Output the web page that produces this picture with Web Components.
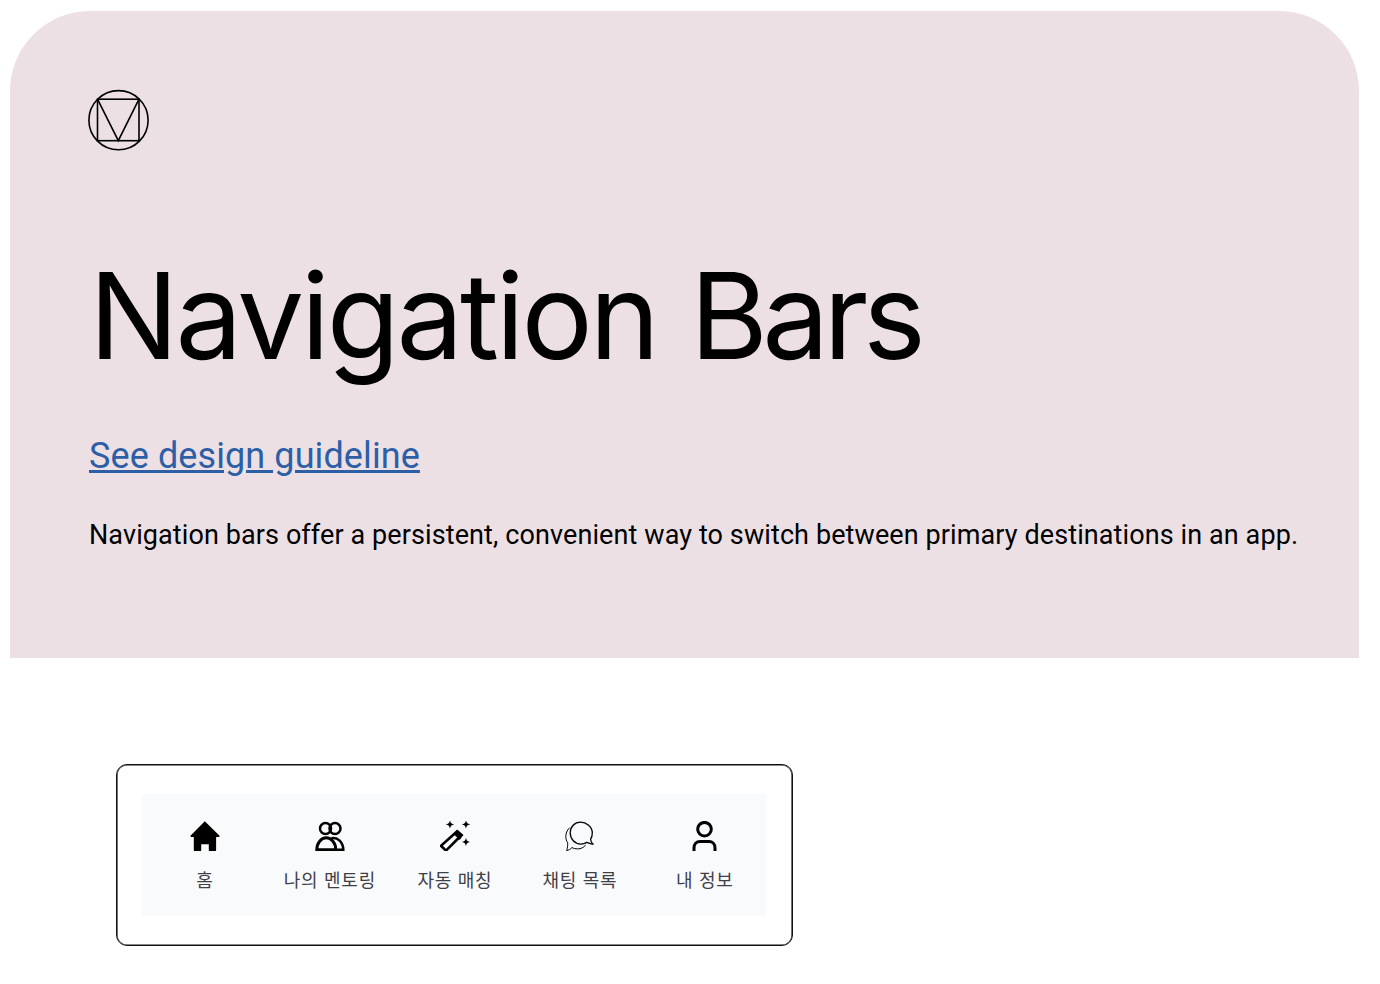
<!DOCTYPE html>
<html lang="ko">
<head>
<meta charset="utf-8">
<title>Navigation Bars</title>
<style>
  html, body { margin: 0; padding: 0; background: #fff; }
</style>
</head>
<body>
<docs-page>
  <docs-hero heading="Navigation" tail="Bars" link="See design guideline">
    Navigation bars offer a persistent, convenient way to switch between primary destinations in an app.
  </docs-hero>
  <story-frame>
    <nav-bar>
      <nav-item label="홈" icon="home"></nav-item>
      <nav-item label="나의 멘토링" icon="people"></nav-item>
      <nav-item label="자동 매칭" icon="wand"></nav-item>
      <nav-item label="채팅 목록" icon="chat"></nav-item>
      <nav-item label="내 정보" icon="person"></nav-item>
    </nav-bar>
  </story-frame>
</docs-page>

<script>
// Página contenedora
class DocsPage extends HTMLElement {
  constructor() {
    super();
    this.attachShadow({ mode: 'open' });
    this.shadowRoot.innerHTML = `
      <style>
        :host { display: block; padding: 11px 21px 0 10px; }
      </style>
      <slot></slot>
    `;
  }
}

class DocsHero extends HTMLElement {
  constructor() {
    super();
    this.attachShadow({ mode: 'open' });
  }

  connectedCallback() {
    this.shadowRoot.innerHTML = `
      <style>
        :host {
          display: block;
          box-sizing: border-box;
          height: 647px;
          padding: 79px 0 0 79px;
          background: #ece0e4;
          border-radius: 80px 80px 0 0;
          color: #000;
          font-family: Roboto, sans-serif;
        }
        .logo { display: block; width: 61px; height: 61px; overflow: visible; }
        h1 {
          margin: 90px 0 0;
          font: 400 119px/150px Inter, sans-serif;
          letter-spacing: -3.2px;
          white-space: nowrap;
        }
        h1 span { margin-left: 3px; letter-spacing: -5.5px; }
        a {
          display: block;
          width: max-content;
          margin-top: 41px;
          font-size: 36px;
          line-height: 48px;
          letter-spacing: .1px;
          color: #2d5fa6;
        }
        p {
          margin: 37px 0 0;
          font-size: 27px;
          line-height: 36px;
          letter-spacing: .1px;
          white-space: nowrap;
        }
      </style>
      <svg class="logo" viewBox="0 0 61 61" fill="none" stroke="#000" stroke-width="1.6">
        <circle cx="29.500" cy="30.200" r="29.600"/>
        <rect x="8.500" y="9.200" width="41.500" height="41.500"/>
        <path d="M8.500 9.200 29.300 50.700 50 9.200"/>
      </svg>
      <h1>${this.getAttribute('heading')} <span>${this.getAttribute('tail')}</span></h1>
      <a href="#">${this.getAttribute('link')}</a>
      <p><slot></slot></p>
    `;
  }
}

class StoryFrame extends HTMLElement {
  constructor() {
    super();
    this.attachShadow({ mode: 'open' });
    this.shadowRoot.innerHTML = `
      <style>
        :host {
          display: block;
          box-sizing: border-box;
          width: 677px;
          height: 182px;
          margin: 106px 0 0 106px;
          padding: 29px 25px 29px 25px;
          border: 1px solid #111;
          border-radius: 11px;
          box-shadow: inset 0 0 0 .6px #111;
          background: #fff;
        }
      </style>
      <slot></slot>
    `;
  }
}

class NavBar extends HTMLElement {
  constructor() {
    super();
    this.attachShadow({ mode: 'open' });
    this.shadowRoot.innerHTML = `
      <style>
        :host {
          display: grid;
          grid-template-columns: repeat(5, 125px);
          width: 624px;
          height: 122px;
          background: #f9fafc;
        }
      </style>
      <slot></slot>
    `;
  }
}

const ICONS = {
  home: `<path fill="#000" d="M14.800.3 .7 14.600c-.5.6-.2 1.500.6 1.500h2.500v12.800c0 .8.6 1.400 1.400 1.400h5.100c.5 0 .9-.4.9-.9v-6.100h7.600v6.100c0 .5.400.9.900.9h5c.8 0 1.400-.6 1.400-1.400V16.100h2.600c.8 0 1.100-.9.600-1.500Z"/>`,
  people: `<g fill="none" stroke="#000" stroke-width="2.500">
      <circle cx="10.500" cy="7.500" r="5.500"/>
      <circle cx="20" cy="7.500" r="5.500"/>
      <path stroke-width="3" d="M1.800 28.800a9.500 12 0 0 1 19 0Z"/>
      <path d="M16.500 17.200a10 12 0 0 1 11.800 11.600H20"/>
    </g>`,
  wand: `<g fill="#000">
      <path d="M10 -.8c.7 3 1.200 3.500 4.300 4.200-3.100.7-3.600 1.200-4.300 4.200-.7-3-1.200-3.500-4.300-4.200 3.100-.7 3.600-1.200 4.300-4.200Z"/>
      <path d="M26 -.8c.7 3 1.200 3.500 4.300 4.200-3.100.7-3.600 1.200-4.300 4.200-.7-3-1.200-3.500-4.300-4.200 3.100-.7 3.600-1.200 4.300-4.200Z"/>
      <path d="M26 16.800c.7 3 1.200 3.500 4.300 4.200-3.100.7-3.600 1.200-4.300 4.200-.7-3-1.200-3.500-4.300-4.200 3.100-.7 3.600-1.200 4.300-4.200Z"/>
    </g>
    <path fill="none" stroke="#000" stroke-width="2.600" d="M17.200 10.200 21.600 14 6 29.600 1 24.800Z"/>
    <path fill="#000" d="M14 13.500 19.800 19 23 14 17.200 9Z"/>`,
  chat: `<g fill="none" stroke="#000" stroke-linejoin="round" stroke-linecap="round">
      <path stroke-width="1.300" d="M15.500 1.200C9.700 1.200 5.200 5.600 5.200 11.800c0 6.300 4.600 11.300 10.600 11.300 2.400 0 4.400-.7 6-1.700 2 .7 4.400 1.900 6.400 1.800-1.700-1.300-2.500-3.300-2.600-5 1.200-1.800 1.700-3.900 1.700-6.300C27.300 5.600 21.300 1.200 15.500 1.200Z"/>
      <path stroke-width="1" d="M4.300 7C1.900 9.500.8 12.500.8 15.500c0 2.400.7 4.600 1.900 6.300.1 2.500-.3 5.700-1 7.700 2.300-.4 4-1.500 5.200-2.900 1.600.9 3.600 1.300 5.700 1.300 3.300 0 5.900-1.300 7.800-3.500"/>
    </g>`,
  person: `<g fill="none" stroke="#000" stroke-width="3">
      <circle cx="14.500" cy="8.200" r="6.800"/>
      <path d="M4 31v-4c0-3.700 2.500-6.500 6-6.500h9c3.500 0 6 2.800 6 6.500v4"/>
    </g>`
};

class NavItem extends HTMLElement {
  connectedCallback() {
    const root = this.attachShadow({ mode: 'open' });
    root.innerHTML = `
      <style>
        :host {
          display: flex;
          flex-direction: column;
          align-items: center;
          padding-top: 27px;
          font-family: "Noto Sans", "Noto Sans CJK KR", sans-serif;
          color: #3f4046;
        }
        svg { display: block; width: 30px; height: 30px; overflow: hidden; }
        span {
          margin-top: 17px;
          padding-left: .8px;
          font-size: 18px;
          line-height: 24px;
          letter-spacing: .8px;
          white-space: nowrap;
        }
      </style>
      <svg viewBox="0 0 30 30">${ICONS[this.getAttribute('icon')]}</svg>
      <span>${this.getAttribute('label')}</span>
    `;
  }
}

customElements.define('docs-page', DocsPage);
customElements.define('docs-hero', DocsHero);
customElements.define('story-frame', StoryFrame);
customElements.define('nav-bar', NavBar);
customElements.define('nav-item', NavItem);
</script>
</body>
</html>
